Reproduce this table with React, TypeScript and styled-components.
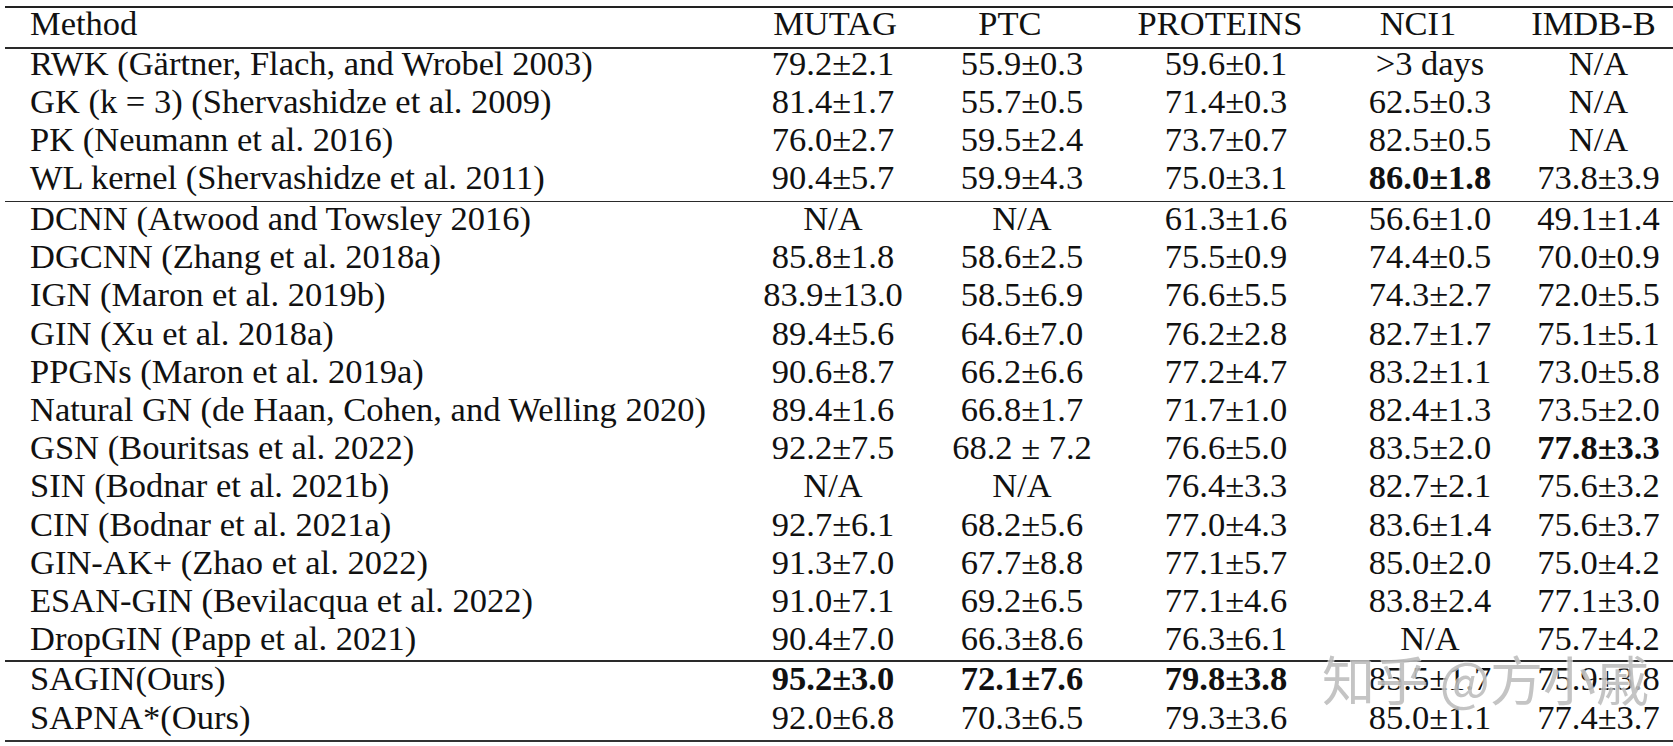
import React from 'react';
import styled, { createGlobalStyle } from 'styled-components';

const GlobalStyle = createGlobalStyle`
  html, body {
    margin: 0;
    padding: 0;
    background: #ffffff;
  }
`;

const COLS = '733px 190px 188px 220px 188px 149px';

const Page = styled.div`
  position: relative;
  width: 1673px;
  height: 746px;
  padding-top: 6px;
  box-sizing: border-box;
  background: #ffffff;
  overflow: hidden;
  font-family: 'Liberation Serif', 'Times New Roman', serif;
  font-size: 34.5px;
  color: #111111;
`;

const Table = styled.div`
  margin-left: 5px;
  width: 1668px;
  border-top: 2px solid #222222;
  border-bottom: 2px solid #333333;
`;

const Section = styled.div<{ $rule?: number }>`
  border-top: ${p => (p.$rule ? `${p.$rule}px solid #2a2a2a` : 'none')};
`;

const Row = styled.div<{ $h: number; $lh?: number }>`
  display: grid;
  grid-template-columns: ${COLS};
  height: ${p => p.$h}px;
  line-height: ${p => p.$lh ?? 32.7}px;
`;

const MethodCell = styled.div`
  padding-left: 25px;
  white-space: nowrap;
`;

const Cell = styled.div<{ $bold?: boolean }>`
  text-align: center;
  white-space: nowrap;
  font-weight: ${p => (p.$bold ? 700 : 400)};
`;

const HeadCell = styled.div<{ $shift?: number }>`
  text-align: center;
  white-space: nowrap;
  position: relative;
  left: ${p => p.$shift ?? 0}px;
`;

const Watermark = styled.div`
  position: absolute;
  left: 1322px;
  top: 645px;
  font-family: 'Noto Sans CJK SC', 'Noto Sans', sans-serif;
  font-size: 53px;
  line-height: 66px;
  white-space: nowrap;
  color: rgba(165, 165, 165, 0.66);
  text-shadow: 1px 1px 0 rgba(255, 255, 255, 0.6), -1px -1px 0 rgba(255, 255, 255, 0.6);
  pointer-events: none;
`;

type Value = string | { v: string; b: true };
type Entry = [string, Value, Value, Value, Value, Value];

const B = (v: string): Value => ({ v, b: true });

const kernels: Entry[] = [
  ['RWK (Gärtner, Flach, and Wrobel 2003)', '79.2±2.1', '55.9±0.3', '59.6±0.1', '>3 days', 'N/A'],
  ['GK (k = 3) (Shervashidze et al. 2009)', '81.4±1.7', '55.7±0.5', '71.4±0.3', '62.5±0.3', 'N/A'],
  ['PK (Neumann et al. 2016)', '76.0±2.7', '59.5±2.4', '73.7±0.7', '82.5±0.5', 'N/A'],
  ['WL kernel (Shervashidze et al. 2011)', '90.4±5.7', '59.9±4.3', '75.0±3.1', B('86.0±1.8'), '73.8±3.9'],
];

const networks: Entry[] = [
  ['DCNN (Atwood and Towsley 2016)', 'N/A', 'N/A', '61.3±1.6', '56.6±1.0', '49.1±1.4'],
  ['DGCNN (Zhang et al. 2018a)', '85.8±1.8', '58.6±2.5', '75.5±0.9', '74.4±0.5', '70.0±0.9'],
  ['IGN (Maron et al. 2019b)', '83.9±13.0', '58.5±6.9', '76.6±5.5', '74.3±2.7', '72.0±5.5'],
  ['GIN (Xu et al. 2018a)', '89.4±5.6', '64.6±7.0', '76.2±2.8', '82.7±1.7', '75.1±5.1'],
  ['PPGNs (Maron et al. 2019a)', '90.6±8.7', '66.2±6.6', '77.2±4.7', '83.2±1.1', '73.0±5.8'],
  ['Natural GN (de Haan, Cohen, and Welling 2020)', '89.4±1.6', '66.8±1.7', '71.7±1.0', '82.4±1.3', '73.5±2.0'],
  ['GSN (Bouritsas et al. 2022)', '92.2±7.5', '68.2 ± 7.2', '76.6±5.0', '83.5±2.0', B('77.8±3.3')],
  ['SIN (Bodnar et al. 2021b)', 'N/A', 'N/A', '76.4±3.3', '82.7±2.1', '75.6±3.2'],
  ['CIN (Bodnar et al. 2021a)', '92.7±6.1', '68.2±5.6', '77.0±4.3', '83.6±1.4', '75.6±3.7'],
  ['GIN-AK+ (Zhao et al. 2022)', '91.3±7.0', '67.7±8.8', '77.1±5.7', '85.0±2.0', '75.0±4.2'],
  ['ESAN-GIN (Bevilacqua et al. 2022)', '91.0±7.1', '69.2±6.5', '77.1±4.6', '83.8±2.4', '77.1±3.0'],
  ['DropGIN (Papp et al. 2021)', '90.4±7.0', '66.3±8.6', '76.3±6.1', 'N/A', '75.7±4.2'],
];

const ours: Entry[] = [
  ['SAGIN(Ours)', B('95.2±3.0'), B('72.1±7.6'), B('79.8±3.8'), '85.5±1.7', '75.9±3.8'],
  ['SAPNA*(Ours)', '92.0±6.8', '70.3±6.5', '79.3±3.6', '85.0±1.1', '77.4±3.7'],
];

const headers: { label: string; shift: number }[] = [
  { label: 'MUTAG', shift: 2 },
  { label: 'PTC', shift: -12 },
  { label: 'PROTEINS', shift: -6 },
  { label: 'NCI1', shift: -12 },
  { label: 'IMDB-B', shift: -5 },
];

const ResultRows = ({ rows, h, lh }: { rows: Entry[]; h: number; lh?: number }) => (
  <>
    {rows.map(([method, ...vals]) => (
      <Row key={method} $h={h} $lh={lh}>
        <MethodCell>{method}</MethodCell>
        {vals.map((val, i) =>
          typeof val === 'string' ? (
            <Cell key={i}>{val}</Cell>
          ) : (
            <Cell key={i} $bold>{val.v}</Cell>
          )
        )}
      </Row>
    ))}
  </>
);

export default function App() {
  return (
    <>
      <GlobalStyle />
      <Page>
        <Table>
          <Row $h={39} $lh={31.7}>
            <MethodCell>Method</MethodCell>
            {headers.map(h => (
              <HeadCell key={h.label} $shift={h.shift}>{h.label}</HeadCell>
            ))}
          </Row>
          <Section $rule={2}>
            <ResultRows rows={kernels} h={38} lh={29.7} />
          </Section>
          <Section $rule={1.5}>
            <ResultRows rows={networks} h={38.2} />
          </Section>
          <Section $rule={2}>
            <ResultRows rows={ours} h={39} />
          </Section>
        </Table>
        <Watermark>知乎 @方小戚</Watermark>
      </Page>
    </>
  );
}
